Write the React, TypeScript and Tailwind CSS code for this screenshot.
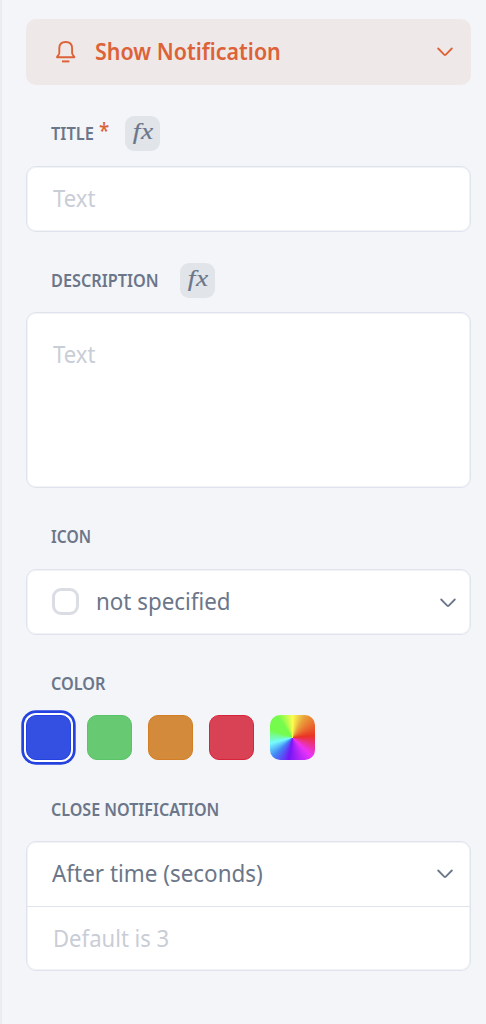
import type { ReactNode } from "react";

function Chevron({ className }: { className: string }) {
  return (
    <svg className={className} width="16" height="10" viewBox="0 0 16 10" fill="none" stroke="currentColor" strokeWidth="1.8" strokeLinecap="round" strokeLinejoin="round">
      <path d="M1.2 1.5 7.2 7.6Q8 8.3 8.8 7.6L14.8 1.5" />
    </svg>
  );
}

function Bell() {
  return (
    <svg className="ml-[30px] shrink-0" width="20" height="24" viewBox="0 0 20 24" fill="none" stroke="currentColor" strokeWidth="1.9" strokeLinecap="round" strokeLinejoin="round">
      <path d="M1 17.2H18.3C18 15.6 16.3 15.3 16.1 13V8C16 4.3 13.5 2 9.7 2S3.4 4.3 3.3 8V13C3.1 15.3 1.3 15.6 1 17.2Z" />
      <path d="M6 21.4H13.4" strokeLinecap="butt" strokeWidth="2" />
    </svg>
  );
}

function Fx() {
  return (
    <span className="flex h-[35px] w-[35px] justify-center rounded-[9px] bg-[#e1e5ea] font-['Liberation_Serif',serif] text-[24px] leading-[31px] font-normal text-[#6b7689] italic [-webkit-text-stroke:0.2px_#6b7689]">
      <span className="ml-[2px] inline-block scale-x-[1.14] tracking-[0.5px]">fx</span>
    </span>
  );
}

function Label({ children, className }: { children: ReactNode; className: string }) {
  return <div className={`flex items-center pl-[25px] text-[17.5px] font-semibold ${className}`}>{children}</div>;
}

export default function App() {
  return (
    <div className="flex h-[1024px] w-[486px] flex-col border-l-2 border-[#eaecf2] bg-[#f3f5f9] pt-[19px] pr-[15px] pl-[24px] font-['Noto_Sans',sans-serif] whitespace-nowrap text-[#6b7689]">
      <div className="flex h-[66px] shrink-0 items-center rounded-[10px] bg-[#efe8e8] text-[#dc6238]">
        <Bell />
        <span className="ml-[19px] origin-left scale-x-[0.933] pb-[2px] text-[23px] font-semibold">Show Notification</span>
        <Chevron className="mr-[18px] ml-auto" />
      </div>

      <Label className="mt-[31px] h-[35px]">
        <span className="w-[48px]"><span className="inline-block origin-left scale-x-[0.94]">TITLE</span></span>
        <span className="w-[26px] pb-[9px] text-[22px] leading-none font-medium text-[#dc6238]">
          <span className="inline-block origin-left scale-x-[0.85]">*</span>
        </span>
        <Fx />
      </Label>
      <div className="mt-[15px] flex h-[66px] shrink-0 items-center rounded-[10px] border border-[#dfe3ec] bg-white pb-[2px] pl-[26px] shadow-[inset_0_0_0_1px_#f1f3f7]">
        <span className="origin-left scale-x-[0.96] text-[23px] text-[#c9cdd6]">Text</span>
      </div>

      <Label className="mt-[31px] h-[35px]">
        <span className="w-[129px]"><span className="inline-block origin-left scale-x-[0.928]">DESCRIPTION</span></span>
        <Fx />
      </Label>
      <div className="mt-[14px] h-[176px] shrink-0 rounded-[10px] border border-[#dfe3ec] bg-white pt-[25px] pl-[26px] shadow-[inset_0_0_0_1px_#f1f3f7]">
        <span className="block origin-left scale-x-[0.96] text-[23px] leading-[32px] text-[#c9cdd6]">Text</span>
      </div>

      <Label className="mt-[31px] h-[35px]">
        <span className="origin-left scale-x-[0.89]">ICON</span>
      </Label>
      <div className="mt-[15px] flex h-[66px] shrink-0 items-center rounded-[10px] border border-[#dfe3ec] bg-white pl-[25px] shadow-[inset_0_0_0_1px_#f1f3f7]">
        <span className="mb-px h-[27px] w-[27px] rounded-[9px] border-3 border-[#dadde4]" />
        <span className="ml-[17px] origin-left scale-x-[0.972] pb-[2px] text-[23px]">not specified</span>
        <Chevron className="mt-[2px] mr-[14px] ml-auto" />
      </div>

      <Label className="mt-[31px] h-[35px]">
        <span className="origin-left scale-x-[0.925]">COLOR</span>
      </Label>
      <div className="mt-[14px] flex h-[45px] shrink-0 gap-[16.2px]">
        <span className="h-[45px] w-[45px] rounded-[10px] border border-[#2340e0] bg-[#3450e3] shadow-[0_0_0_2px_white,0_0_0_4.7px_#2442df]" />
        <span className="h-[45px] w-[45px] rounded-[10px] border border-[#5ac268] bg-[#67c971]" />
        <span className="h-[45px] w-[45px] rounded-[10px] border border-[#d17e24] bg-[#d38a3a]" />
        <span className="-ml-[0.4px] h-[45px] w-[45px] rounded-[10px] border border-[#d8243a] bg-[#d94155]" />
        <span className="h-[45px] w-[45px] rounded-[10px] bg-[conic-gradient(#faff50_0deg,#e9a23b_30deg,#ea3323_85deg,#ea33f7_135deg,#7316f5_190deg,#4285f5_225deg,#75fbfd_255deg,#75fb4c_290deg,#75fb4c_325deg,#faff50_360deg)]" />
      </div>

      <Label className="mt-[32px] h-[35px]">
        <span className="origin-left scale-x-[0.918]">CLOSE NOTIFICATION</span>
      </Label>
      <div className="mt-[14px] flex h-[130px] shrink-0 flex-col rounded-[10px] border border-[#dfe3ec] bg-white shadow-[inset_0_0_0_1px_#f1f3f7]">
        <div className="flex h-[65px] items-center border-b border-[#dfe3ec] pl-[25px]">
          <span className="origin-left scale-x-[0.975] pb-[2px] text-[23px]">After time (seconds)</span>
          <Chevron className="mr-[17px] ml-auto" />
        </div>
        <div className="flex h-[63px] items-center pl-[26px]">
          <span className="origin-left scale-x-[0.96] pb-px text-[23px] text-[#c9cdd6]">Default is 3</span>
        </div>
      </div>
    </div>
  );
}
